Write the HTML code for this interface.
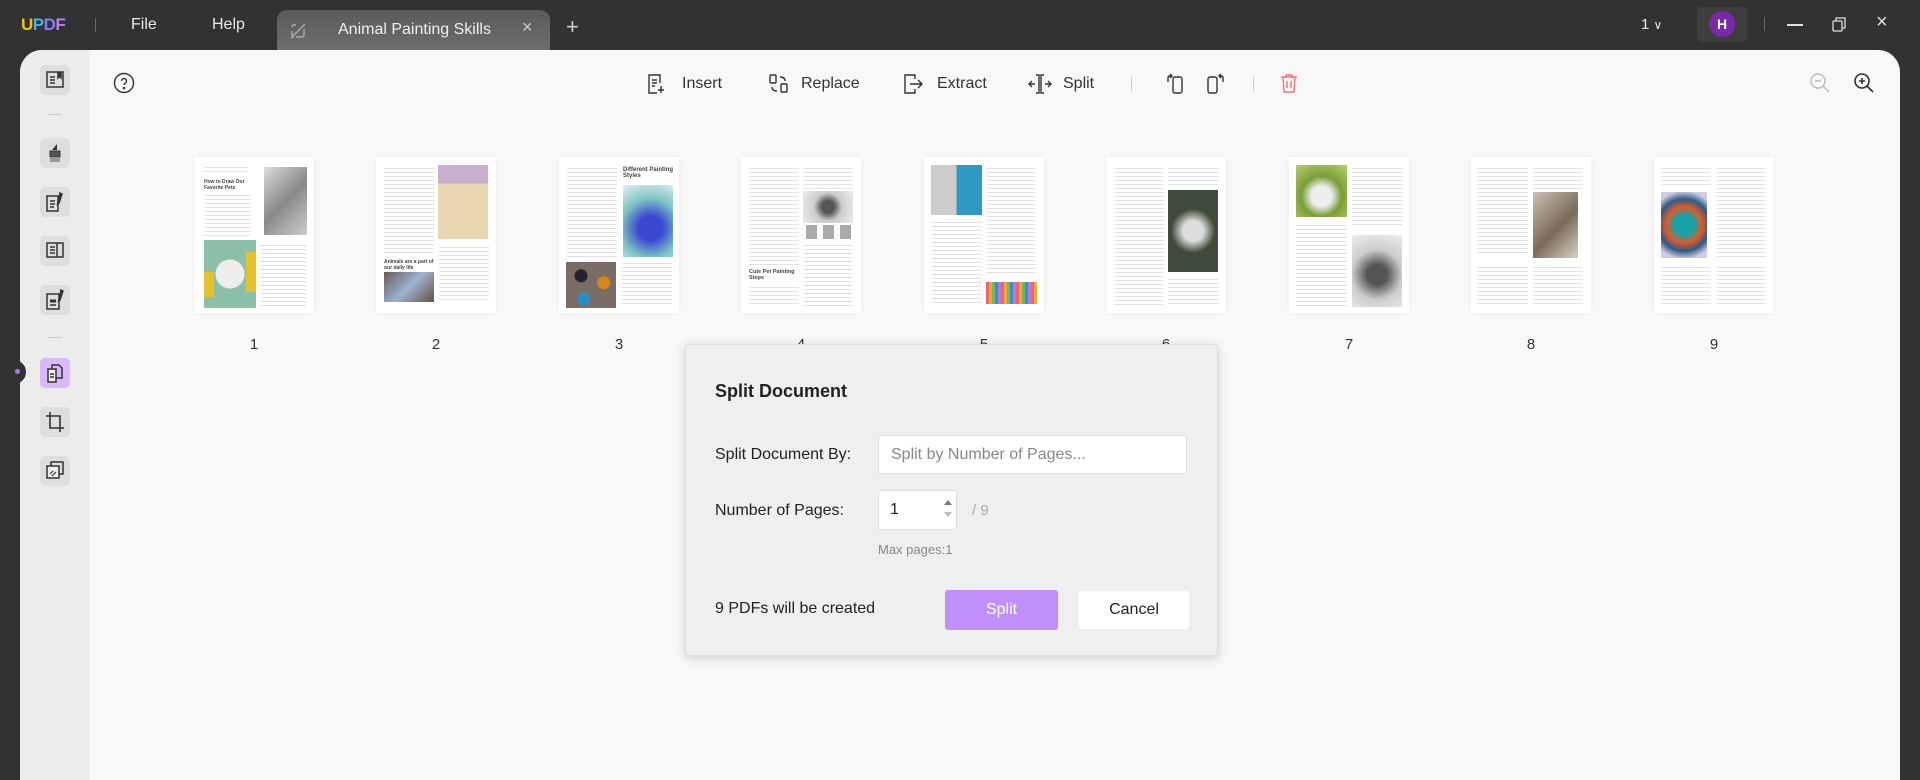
<!DOCTYPE html>
<html><head><meta charset="utf-8"><style>
*{margin:0;padding:0;box-sizing:border-box}
body{width:1920px;height:780px;background:#323232;font-family:"Liberation Sans",sans-serif;position:relative;overflow:hidden}
.a{position:absolute}
.top{color:#e8e8e8;font-size:16px}
.panel{left:20px;top:50px;width:1880px;height:730px;background:#f8f8f8;border-radius:22px 22px 0 0;overflow:hidden}
.side{left:0;top:0;width:70px;height:730px;background:#ececec}
.ib{width:30px;height:30px;border-radius:5px;background:#dedede;left:20px}
.tb{font-size:16px;color:#333}
.pg{width:120px;height:156px;top:157px;background:#fff;box-shadow:0 0 4px rgba(0,0,0,.06)}
.t{position:absolute;background:repeating-linear-gradient(#fff 0 2px,#e2e2e2 2px 3px,#fff 3px 4px)}
.lb{top:336px;width:120px;text-align:center;font-size:15px;color:#333}
.dlg{left:685px;top:344px;width:533px;height:312px;background:#efefef;border:1px solid #ddd;box-shadow:0 2px 10px rgba(0,0,0,.18);border-radius:3px}
.dl{font-size:16px;color:#222}
</style></head><body>
<!-- top bar -->
<div class="a" style="left:21px;top:15px;font-size:17px;font-weight:bold;letter-spacing:-0.5px"><span style="color:#f5c400">U</span><span style="color:#49b1f3">P</span><span style="color:#8b7cf6">D</span><span style="color:#c07ff5">F</span></div>
<div class="a" style="left:95px;top:18px;width:1px;height:14px;background:#666"></div>
<div class="a top" style="left:131px;top:16px">File</div>
<div class="a top" style="left:212px;top:16px">Help</div>
<div class="a" style="left:277px;top:10px;width:273px;height:41px;background:linear-gradient(#5a5a5a,#6e6e6e);border-radius:10px 10px 0 0"></div>
<svg class="a" style="left:288px;top:21px" width="20" height="20" viewBox="0 0 20 20" fill="none" stroke="#aaa" stroke-width="1.4"><path d="M4 6q0-2 2-2h2M16 8v6q0 2-2 2H8M3 17L17 3M4 10v4q0 2 2 2"/></svg>
<div class="a top" style="left:338px;top:21px;color:#eee">Animal Painting Skills</div>
<div class="a" style="left:522px;top:17px;color:#ccc;font-size:18px">×</div>
<div class="a" style="left:566px;top:14px;color:#ccc;font-size:22px;font-weight:300">+</div>
<div class="a top" style="left:1641px;top:16px;font-size:15px">1 <span style="font-size:12px">∨</span></div>
<div class="a" style="left:1697px;top:7px;width:50px;height:35px;background:#3e3e3e;border-radius:4px"></div>
<div class="a" style="left:1709px;top:11px;width:26px;height:26px;border-radius:50%;background:#7a2aa8;color:#fff;font-size:14px;font-weight:bold;text-align:center;line-height:26px">H</div>
<div class="a" style="left:1764px;top:17px;width:1px;height:14px;background:#666"></div>
<div class="a" style="left:1787px;top:24px;width:16px;height:1.5px;background:#ddd"></div>
<svg class="a" style="left:1831px;top:16px" width="16" height="16" fill="none" stroke="#ddd" stroke-width="1.3"><rect x="2" y="5" width="9" height="10" rx="1"/><path d="M5 5V2h9v10h-3"/></svg>
<div class="a" style="left:1876px;top:11px;color:#ddd;font-size:20px">×</div>

<div class="a panel">
 <div class="a side">
  <div class="a ib" style="top:15px"></div>
  <svg class="a" style="left:25px;top:20px" width="20" height="20" fill="none" stroke="#333" stroke-width="1.5"><rect x="2" y="2" width="16" height="15"/><path d="M5 7h5M5 10h5M5 13h5"/><path d="M13 2v6l1.5-1.5L16 8V2" fill="#333"/></svg>
  <div class="a" style="left:28px;top:64px;width:14px;height:1px;background:#ccc"></div>
  <div class="a ib" style="top:88px"></div>
  <svg class="a" style="left:25px;top:92px" width="20" height="22"><path d="M7 8l5-6v6z" fill="#333"/><path d="M5 9h10v6H5z" fill="#555" stroke="#333"/><path d="M5 15h10v5H5z" fill="#999"/></svg>
  <div class="a ib" style="top:137px"></div>
  <svg class="a" style="left:25px;top:141px" width="20" height="22" fill="none" stroke="#333" stroke-width="1.5"><path d="M2 5h11v15H2z"/><path d="M5 10h5M5 13h5M5 16h4"/><path d="M15 2l2 1-3 9-1.5 1 .5-2z" fill="#333"/></svg>
  <div class="a ib" style="top:186px"></div>
  <svg class="a" style="left:25px;top:190px" width="20" height="20" fill="none" stroke="#333" stroke-width="1.5"><rect x="2" y="3" width="16" height="14"/><path d="M12 3v14M5 7h5M5 10h5M5 13h5"/></svg>
  <div class="a ib" style="top:235px"></div>
  <svg class="a" style="left:25px;top:238px" width="20" height="22" fill="none" stroke="#333" stroke-width="1.5"><path d="M2 6h12v15H2z"/><path d="M5 13h6" stroke-width="3"/><path d="M5 17h6"/><path d="M16 2l2 1-3 9-1.5 1 .5-2z" fill="#333"/></svg>
  <div class="a" style="left:28px;top:287px;width:14px;height:1px;background:#ccc"></div>
  <div class="a ib" style="top:308px;background:#d9b8fb"></div>
  <svg class="a" style="left:25px;top:312px" width="20" height="22" fill="none" stroke="#333" stroke-width="1.5"><path d="M7 3h7l3 3v10H7z"/><path d="M3 7h8v13H3z" fill="#eee"/><path d="M5 12h4M5 15h4"/></svg>
  <div class="a ib" style="top:357px"></div>
  <svg class="a" style="left:25px;top:361px" width="20" height="22" fill="none" stroke="#333" stroke-width="1.6"><path d="M5 1v16h14M1 5h14v16"/></svg>
  <div class="a ib" style="top:406px"></div>
  <svg class="a" style="left:25px;top:410px" width="20" height="20" fill="none" stroke="#333" stroke-width="1.5"><rect x="6" y="2" width="12" height="12"/><rect x="2" y="6" width="12" height="12" fill="#eee"/><path d="M5 14l3-3M7 16l4-4" stroke-width="1.2"/></svg>
 </div>
 <!-- toolbar -->
 <svg class="a" style="left:93px;top:22px" width="22" height="22" fill="none" stroke="#333" stroke-width="1.4"><circle cx="11" cy="11" r="9.5"/><path d="M8.5 9a2.5 2.5 0 1 1 3.5 2.3c-.7.4-1 .8-1 1.7"/><circle cx="11" cy="16" r=".6" fill="#333"/></svg>
 <svg class="a" style="left:626px;top:23px" width="20" height="22" fill="none" stroke="#333" stroke-width="1.4"><path d="M14 10V2H3v18h8"/><path d="M6 7h5M6 10h5M6 13h3M15 13v7M12 17h6"/></svg>
 <div class="a tb" style="left:662px;top:25px">Insert</div>
 <svg class="a" style="left:748px;top:23px" width="22" height="22" fill="none" stroke="#333" stroke-width="1.4"><rect x="2" y="2" width="6" height="8" rx="1"/><rect x="13" y="11" width="6" height="8" rx="1"/><path d="M12 4c3 0 5 1 5 4M9 18c-3 0-5-1-5-4"/></svg>
 <div class="a tb" style="left:781px;top:25px">Replace</div>
 <svg class="a" style="left:882px;top:23px" width="22" height="22" fill="none" stroke="#333" stroke-width="1.4"><path d="M13 6V2H3v18h10v-4M8 11h12M16 7l4 4-4 4"/></svg>
 <div class="a tb" style="left:917px;top:25px">Extract</div>
 <svg class="a" style="left:1008px;top:23px" width="24" height="22" fill="none" stroke="#333" stroke-width="1.4"><path d="M8 2h3v18H8M16 2h-3v18h3M1 11h6M4 8l-3 3 3 3M17 11h6M20 8l3 3-3 3"/></svg>
 <div class="a tb" style="left:1043px;top:25px">Split</div>
 <div class="a" style="left:1111px;top:27px;width:1px;height:14px;background:#ccc"></div>
 <svg class="a" style="left:1145px;top:22px" width="22" height="24" fill="none" stroke="#333" stroke-width="1.4"><rect x="8" y="5" width="9" height="16" rx="2"/><path d="M3 10V6q0-2 2-2h2M5 2l2 2-2 2"/></svg>
 <svg class="a" style="left:1185px;top:22px" width="22" height="24" fill="none" stroke="#333" stroke-width="1.4"><rect x="3" y="5" width="9" height="16" rx="2"/><path d="M18 10V6q0-2-2-2h-2M16 2l-2 2 2 2"/></svg>
 <div class="a" style="left:1233px;top:27px;width:1px;height:14px;background:#ccc"></div>
 <svg class="a" style="left:1258px;top:22px" width="22" height="22" fill="none" stroke="#f0717a" stroke-width="1.4"><path d="M3 5h16M8 5V3h6v2M5 5l1 15h10l1-15M9 9v7M13 9v7"/></svg>
 <svg class="a" style="left:1789px;top:22px" width="22" height="22" fill="none" stroke="#bbb" stroke-width="1.4"><circle cx="9" cy="9" r="7"/><path d="M6 9h6M14 14l6 6"/></svg>
 <svg class="a" style="left:1833px;top:22px" width="22" height="22" fill="none" stroke="#333" stroke-width="1.6"><circle cx="9" cy="9" r="7"/><path d="M6 9h6M9 6v6M14 14l6 6"/></svg>

 <div class="a pg" style="left:174px;top:107px">
  <div class="t" style="left:10px;top:8px;width:44px;height:10px"></div>
  <div style="position:absolute;left:10px;top:22px;font-size:5px;font-weight:bold;color:#444;width:44px">How to Draw Our Favorite Pets</div>
  <div class="t" style="left:10px;top:36px;width:46px;height:44px"></div>
  <div class="a" style="left:70px;top:10px;width:43px;height:68px;background:linear-gradient(135deg,#ddd,#888 50%,#ccc)"></div>
  <div class="a" style="left:10px;top:83px;width:52px;height:68px;background:radial-gradient(circle at 50% 50%,#eee 0 14px,#8bbfa8 15px);"></div>
  <div class="a" style="left:10px;top:115px;width:10px;height:25px;background:#e5c22d"></div><div class="a" style="left:52px;top:95px;width:10px;height:40px;background:#e5c22d"></div>
  <div class="t" style="left:66px;top:86px;width:46px;height:64px"></div>
 </div>
 <div class="a pg" style="left:356px;top:107px">
  <div class="t" style="left:8px;top:9px;width:50px;height:90px"></div>
  <div class="a" style="left:62px;top:8px;width:50px;height:74px;background:linear-gradient(#c9b0cf 0 25%,#e8d6b0 25%);"></div>
  <div class="t" style="left:63px;top:88px;width:50px;height:58px"></div>
  <div style="position:absolute;left:8px;top:102px;font-size:5px;font-weight:bold;color:#444;width:50px">Animals are a part of our daily life</div>
  <div class="a" style="left:8px;top:115px;width:50px;height:30px;background:linear-gradient(135deg,#6a5a55,#9bb3d3 50%,#6b4f3c)"></div>
 </div>
 <div class="a pg" style="left:539px;top:107px">
  <div class="t" style="left:8px;top:9px;width:50px;height:92px"></div>
  <div style="position:absolute;left:64px;top:10px;font-size:6px;font-weight:bold;color:#444;width:50px">Different Painting Styles</div>
  <div class="a" style="left:64px;top:28px;width:50px;height:72px;background:radial-gradient(circle at 55% 60%,#3a47d0 0 12px,#7fc6c4 30px,#e6f0ee)"></div>
  <div class="a" style="left:7px;top:105px;width:50px;height:46px;background:radial-gradient(circle at 30% 30%,#223 0 6px,transparent 7px),radial-gradient(circle at 75% 45%,#d8861c 0 6px,transparent 7px),radial-gradient(circle at 35% 80%,#2a8ec0 0 6px,transparent 7px),#7a6d66"></div>
  <div class="t" style="left:63px;top:104px;width:50px;height:44px"></div>
 </div>
 <div class="a pg" style="left:721px;top:107px">
  <div class="t" style="left:8px;top:9px;width:50px;height:100px"></div>
  <div class="t" style="left:62px;top:9px;width:50px;height:30px"></div>
  <div class="a" style="left:62px;top:34px;width:50px;height:32px;background:radial-gradient(circle,#555 0 6px,#ccc 14px,#eee)"></div>
  <div class="a" style="left:62px;top:68px;width:50px;height:14px;background:repeating-linear-gradient(90deg,#fff 0 3px,#aaa 3px 14px,#fff 14px 17px)"></div>
  <div style="position:absolute;left:8px;top:112px;font-size:5.5px;font-weight:bold;color:#444;width:50px">Cute Pet Painting Steps</div>
  <div class="t" style="left:8px;top:128px;width:50px;height:20px"></div>
  <div class="t" style="left:62px;top:86px;width:50px;height:64px"></div>
 </div>
 <div class="a pg" style="left:904px;top:107px">
  <div class="a" style="left:7px;top:8px;width:51px;height:50px;background:linear-gradient(90deg,#ccc 0 50%,#2e9ac4 50%)"></div>
  <div class="t" style="left:62px;top:9px;width:50px;height:110px"></div>
  <div class="t" style="left:7px;top:63px;width:51px;height:86px"></div>
  <div class="a" style="left:62px;top:125px;width:51px;height:22px;background:repeating-linear-gradient(90deg,#e66 0 3px,#ea3 3px 6px,#6b6 6px 9px,#48c 9px 12px,#b7d 12px 15px)"></div>
 </div>
 <div class="a pg" style="left:1086px;top:107px">
  <div class="t" style="left:8px;top:9px;width:50px;height:140px"></div>
  <div class="t" style="left:62px;top:9px;width:50px;height:20px"></div>
  <div class="a" style="left:62px;top:33px;width:50px;height:82px;background:radial-gradient(circle at 50% 50%,#ddd 0 10px,#3f4a3a 22px)"></div>
  <div class="t" style="left:62px;top:120px;width:50px;height:30px"></div>
 </div>
 <div class="a pg" style="left:1269px;top:107px">
  <div class="a" style="left:7px;top:8px;width:51px;height:52px;background:radial-gradient(circle at 50% 60%,#eee 0 10px,#7a9e3a 20px,#b9cf6a)"></div>
  <div class="t" style="left:63px;top:9px;width:50px;height:62px"></div>
  <div class="t" style="left:7px;top:66px;width:51px;height:84px"></div>
  <div class="a" style="left:63px;top:78px;width:50px;height:72px;background:radial-gradient(circle at 50% 55%,#555 0 10px,#ccc 25px,#eee)"></div>
 </div>
 <div class="a pg" style="left:1451px;top:107px">
  <div class="t" style="left:7px;top:9px;width:50px;height:90px"></div>
  <div class="t" style="left:62px;top:9px;width:50px;height:24px"></div>
  <div class="a" style="left:62px;top:35px;width:45px;height:66px;background:linear-gradient(135deg,#c9c0b5,#7b6b5a 55%,#d8d0c7)"></div>
  <div class="t" style="left:7px;top:108px;width:50px;height:40px"></div>
  <div class="t" style="left:62px;top:108px;width:50px;height:40px"></div>
 </div>
 <div class="a pg" style="left:1634px;top:107px">
  <div class="t" style="left:7px;top:9px;width:50px;height:22px"></div>
  <div class="t" style="left:62px;top:9px;width:50px;height:92px"></div>
  <div class="a" style="left:7px;top:35px;width:46px;height:66px;background:radial-gradient(circle at 50% 50%,#17a2a8 0 10px,#e05a25 18px,#2d5a8a 26px,#cfcbe0 34px)"></div>
  <div class="t" style="left:7px;top:108px;width:50px;height:40px"></div>
  <div class="t" style="left:62px;top:108px;width:50px;height:40px"></div>
 </div>
 <div class="a lb" style="left:174px;top:286px">1</div>
 <div class="a lb" style="left:356px;top:286px">2</div>
 <div class="a lb" style="left:539px;top:286px">3</div>
 <div class="a lb" style="left:721px;top:286px">4</div>
 <div class="a lb" style="left:904px;top:286px">5</div>
 <div class="a lb" style="left:1086px;top:286px">6</div>
 <div class="a lb" style="left:1269px;top:286px">7</div>
 <div class="a lb" style="left:1451px;top:286px">8</div>
 <div class="a lb" style="left:1634px;top:286px">9</div>
</div>
<div class="a" style="left:10px;top:360px;width:16px;height:24px;background:#323232;border-radius:0 12px 12px 0"></div>
<div class="a" style="left:15px;top:369px;width:5px;height:5px;border-radius:50%;background:#a77cf0"></div>

<div class="a dlg">
 <div class="a" style="left:29px;top:36px;font-size:18px;font-weight:bold;color:#222">Split Document</div>
 <div class="a dl" style="left:29px;top:101px">Split Document By:</div>
 <div class="a" style="left:192px;top:90px;width:309px;height:39px;background:#fff;border:1px solid #ddd;border-radius:3px;padding:10px 12px;font-size:16px;color:#888">Split by Number of Pages...</div>
 <div class="a dl" style="left:29px;top:157px">Number of Pages:</div>
 <div class="a" style="left:192px;top:145px;width:79px;height:40px;background:#fff;border:1px solid #ddd;border-radius:3px;padding:10px 11px;font-size:16px;color:#222">1</div>
 <div class="a" style="left:258px;top:155px;width:0;height:0;border:4px solid transparent;border-bottom:5px solid #777;border-top:0"></div>
 <div class="a" style="left:258px;top:167px;width:0;height:0;border:4px solid transparent;border-top:5px solid #bbb;border-bottom:0"></div>
 <div class="a" style="left:286px;top:157px;font-size:15px;color:#aaa">/ 9</div>
 <div class="a" style="left:192px;top:197px;font-size:13px;color:#888">Max pages:1</div>
 <div class="a dl" style="left:29px;top:255px">9 PDFs will be created</div>
 <div class="a" style="left:259px;top:245px;width:113px;height:40px;background:#c08ffa;border-radius:3px;color:#fff;font-size:16px;text-align:center;line-height:40px">Split</div>
 <div class="a" style="left:393px;top:246px;width:110px;height:38px;background:#fff;border-radius:3px;color:#222;font-size:16px;text-align:center;line-height:38px">Cancel</div>
</div>
</body></html>
